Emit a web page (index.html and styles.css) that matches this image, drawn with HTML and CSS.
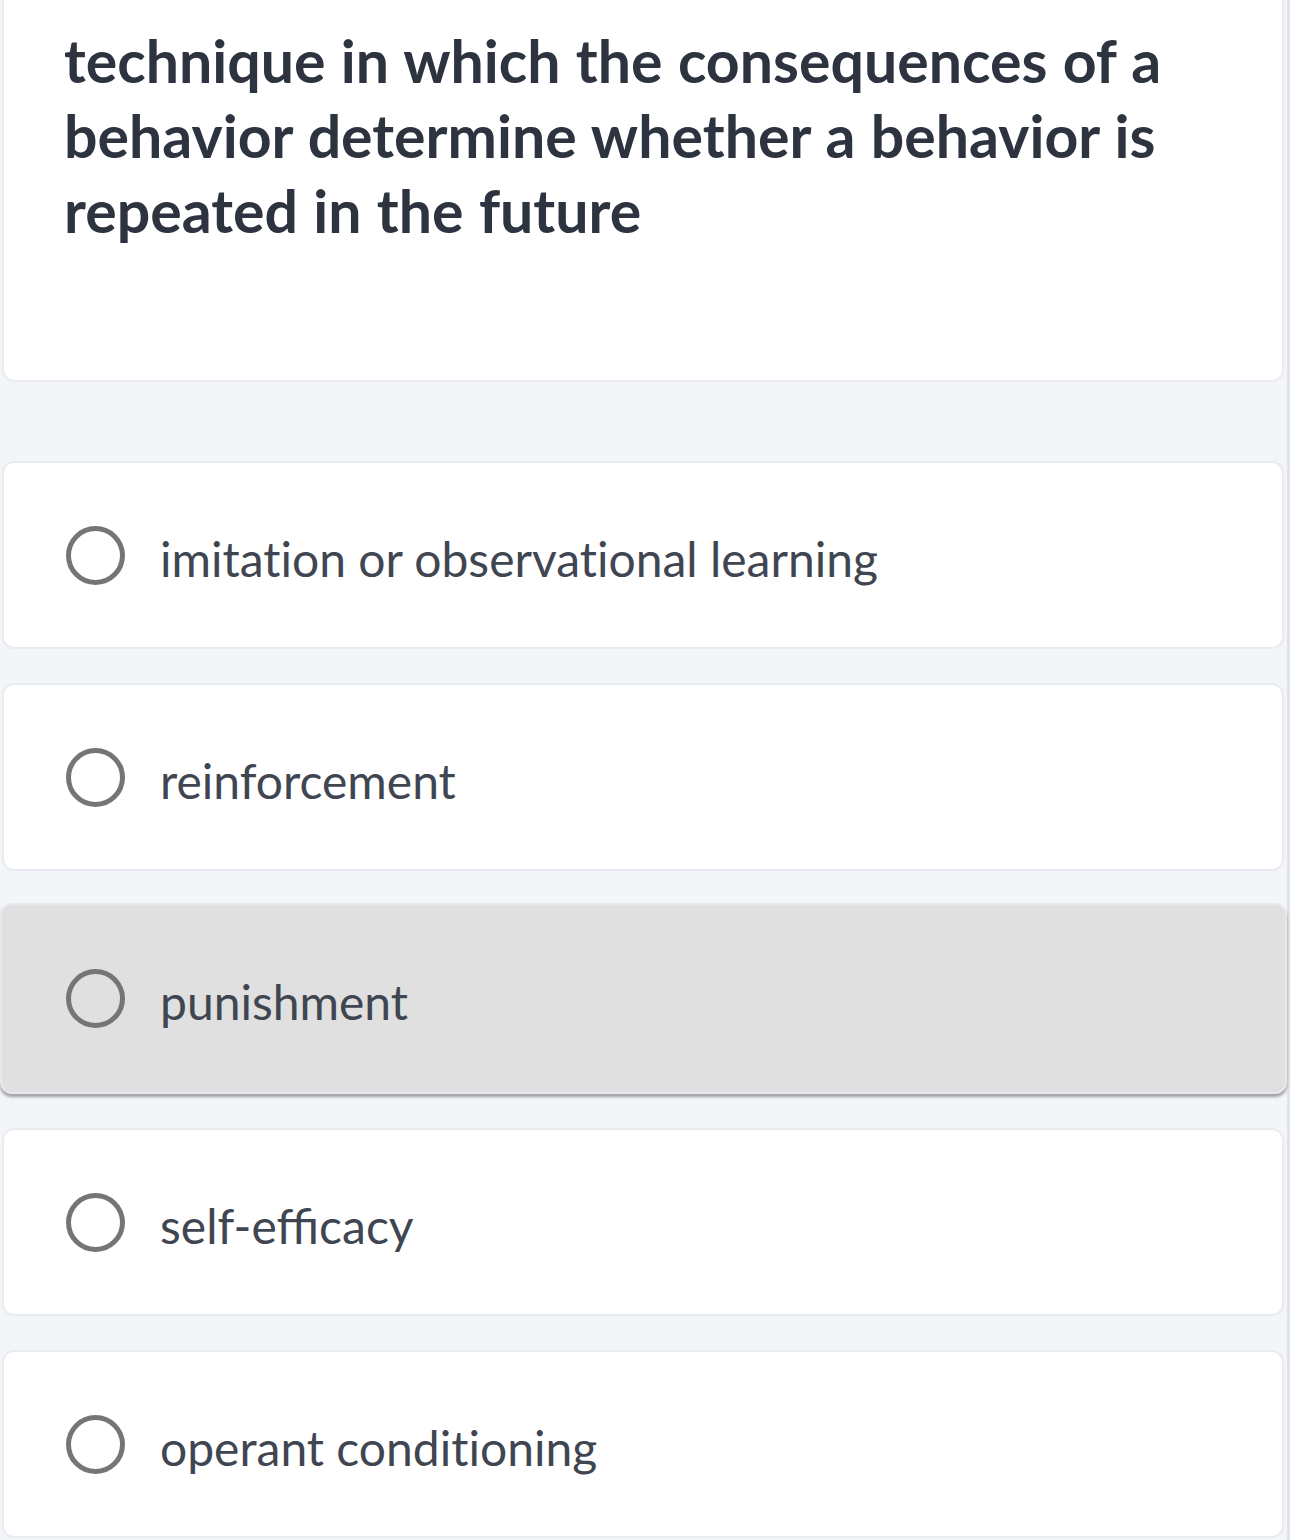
FILE: index.html
```html
<!DOCTYPE html>
<html>
<head>
<meta charset="utf-8">
<link rel="stylesheet" href="styles.css">
</head>
<body>
<div class="page">
  <div class="question">
    <p class="qtext">technique in which the consequences of a behavior determine whether a behavior is repeated in the future</p>
  </div>
  <div class="options">
    <div class="option"><span class="radio"></span><span class="label">imitation or observational learning</span></div>
    <div class="option"><span class="radio"></span><span class="label">reinforcement</span></div>
    <div class="option selected"><span class="radio"></span><span class="label">punishment</span></div>
    <div class="option"><span class="radio"></span><span class="label lig">self-efficacy</span></div>
    <div class="option"><span class="radio"></span><span class="label">operant conditioning</span></div>
  </div>
</div>
</body>
</html>
```
FILE: styles.css
```css
html, body {
  margin: 0;
  padding: 0;
}
body {
  background: #f3f6f8;
  font-family: Lato, "Open Sans", sans-serif;
  width: 1290px;
  height: 1540px;
  overflow: hidden;
}
.page {
  box-sizing: border-box;
  width: 1290px;
  height: 1540px;
  padding: 0 3px 0 2px;
  border-right: 3px solid #e1e3e7;
}
.question {
  box-sizing: border-box;
  height: 382px;
  background: #fff;
  border: 2px solid #e9ebf1;
  border-top: none;
  border-radius: 0 0 12px 12px;
  padding: 23px 30px 0 60px;
}
.qtext {
  margin: 0;
  font-size: 59px;
  font-weight: 700;
  line-height: 75px;
  color: #2d3440;
  word-spacing: 1px;
  font-variant-ligatures: none;
}
.options {
  display: flex;
  flex-direction: column;
  gap: 34px;
  margin-top: 79px;
}
.option {
  box-sizing: border-box;
  height: 188px;
  background: #fff;
  border: 2px solid #e9ebf1;
  border-radius: 12px;
  display: flex;
  align-items: center;
  padding: 0 0 0 62px;
  gap: 35px;
}
.option.selected {
  background: #e0e0e0;
  border-color: #e6e8ee;
  height: 191px;
  margin: -2px -3px 0 -2px;
  box-shadow: 0 3px 3px rgba(0, 0, 0, 0.35);
  padding-left: 64px;
}
.radio {
  box-sizing: border-box;
  width: 59px;
  height: 59px;
  border: 5px solid #757575;
  border-radius: 50%;
  flex: none;
}
.label {
  font-size: 48px;
  color: #3f4651;
  line-height: 1.2;
  padding-top: 7px;
  font-variant-ligatures: none;
}
.label.lig {
  font-variant-ligatures: common-ligatures;
}
```
